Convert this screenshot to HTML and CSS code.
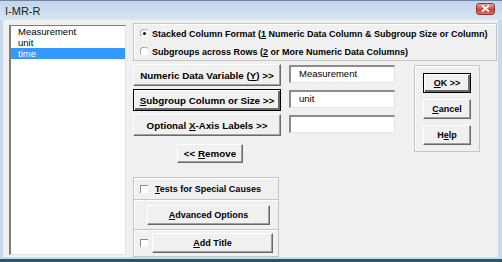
FILE: index.html
```html
<!DOCTYPE html>
<html lang="en">
<head>
   <meta charset="UTF-8">
   <title>I-MR-R</title>
   <link rel="stylesheet" href="styles.css">
</head>
<body>
   <div class="window">
      <div class="titlebar">
         <span class="title">I-MR-R</span>
         <span class="close">
            <svg width="9" height="7" viewBox="0 0 9 7">
               <path d="M1 0.5 L8 6.5 M8 0.5 L1 6.5" stroke="#fff" stroke-width="1.8"/>
            </svg>
         </span>
      </div>
      <div class="client">
         <div class="listbox">
            <div class="item">Measurement</div>
            <div class="item">unit</div>
            <div class="item selected">time</div>
         </div>
         <div class="main">
            <div class="group radio-box">
               <label class="radio-row">
                  <svg class="radio" width="9" height="9" viewBox="0 0 9 9">
                     <circle cx="4.5" cy="4.5" r="4" fill="#fff"/>
                     <path d="M1.2 7 A4 4 0 0 1 7.5 1.4" fill="none" stroke="#8a8a8a" stroke-width="1"/>
                     <circle cx="4.5" cy="4.5" r="1.6" fill="#1a1a1a"/>
                  </svg>
                  <span>Stacked Column Format (<u>1</u> Numeric Data Column &amp; Subgroup Size or Column)</span>
               </label>
               <label class="radio-row">
                  <svg class="radio" width="9" height="9" viewBox="0 0 9 9">
                     <circle cx="4.5" cy="4.5" r="4" fill="#fff"/>
                     <path d="M1.2 7 A4 4 0 0 1 7.5 1.4" fill="none" stroke="#8a8a8a" stroke-width="1"/>
                  </svg>
                  <span>Subgroups across Rows (<u>2</u> or More Numeric Data Columns)</span>
               </label>
            </div>

            <div class="middle">
               <div class="btn-col">
                  <button class="btn var-btn"><span>Numeric Data Variable (<u>Y</u>) &gt;&gt;</span></button>
                  <button class="btn var-btn focused"><span><u>S</u>ubgroup Column or Size &gt;&gt;</span></button>
                  <button class="btn var-btn"><span>Optional <u>X</u>-Axis Labels &gt;&gt;</span></button>
                  <button class="btn remove-btn"><span>&lt;&lt; <u>R</u>emove</span></button>
               </div>
               <div class="field-col">
                  <div class="field">Measurement</div>
                  <div class="field">unit</div>
                  <div class="field"></div>
               </div>
               <div class="group ok-panel">
                  <button class="btn small-btn focused"><span><u>O</u>K &gt;&gt;</span></button>
                  <button class="btn small-btn"><span><u>C</u>ancel</span></button>
                  <button class="btn small-btn"><span>H<u>e</u>lp</span></button>
               </div>
            </div>

            <div class="options">
               <div class="group opt-box tests-box">
                  <span class="check"></span>
                  <span class="opt-label"><u>T</u>ests for Special Causes</span>
               </div>
               <div class="group opt-box adv-box">
                  <button class="btn adv-btn"><span><u>A</u>dvanced Options</span></button>
               </div>
               <div class="group opt-box title-box">
                  <span class="check"></span>
                  <button class="btn title-btn"><span><u>A</u>dd Title</span></button>
               </div>
            </div>
         </div>
      </div>
   </div>
</body>
</html>
```

FILE: styles.css
```css
body {
   margin: 0;
   background: #fff;
}

.window {
   width: 502px;
   height: 262px;
   box-sizing: border-box;
   background: #c9d9ec;
   border-bottom: 3px solid #215a6c;
   display: flex;
   flex-direction: column;
   font-family: "Liberation Sans", Arial, sans-serif;
   font-size: 9.5px;
   color: #000;
   overflow: hidden;
}

.titlebar {
   height: 20px;
   flex-shrink: 0;
   display: flex;
   align-items: center;
   justify-content: space-between;
   padding: 0 7px 0 5px;
   background: linear-gradient(#c3d5ea, #d7e4f2);
   border-top: 1px solid #6f86a3;
   box-sizing: border-box;
}

.title {
   font-size: 11px;
   color: #1b1b1b;
   padding-top: 1px;
}

.close {
   width: 19px;
   height: 12px;
   border-radius: 3px;
   border: 1px solid #8c3b34;
   box-sizing: border-box;
   background: linear-gradient(#e9a394, #c7463a 55%, #d4705f);
   display: flex;
   align-items: center;
   justify-content: center;
   margin-bottom: 4px;
}

.client {
   height: 237px;
   margin: 0 4px 0 3px;
   background: #f0f0f0;
   display: flex;
   gap: 7px;
   padding: 3px 0 0 6px;
   box-sizing: border-box;
}

.listbox {
   width: 117px;
   height: 230px;
   margin-top: 2px;
   box-sizing: border-box;
   background: #fff;
   border-top: 1px solid #7d7d7d;
   border-left: 2px solid #7d7d7d;
   border-right: 1px solid #e3e3e3;
   border-bottom: 1px solid #e3e3e3;
}

.item {
   height: 11px;
   line-height: 11px;
   padding-left: 7px;
}

.selected {
   background: #3399ff;
   color: #fff;
}

.main {
   width: 364px;
   display: flex;
   flex-direction: column;
}

.group {
   border: 1px solid #c5c5c5;
   box-shadow: inset 1px 1px 0 #fff;
   box-sizing: border-box;
}

.radio-box {
   height: 38px;
   padding: 1px 0 0 6px;
   display: flex;
   flex-direction: column;
   gap: 1px;
}

.radio-row {
   height: 17px;
   display: flex;
   align-items: center;
   gap: 3px;
   font-weight: bold;
   font-size: 9px;
}

.middle {
   display: flex;
   margin-top: 3px;
}

.btn-col {
   width: 148px;
   display: flex;
   flex-direction: column;
   gap: 3px;
}

.btn {
   font-family: inherit;
   font-weight: bold;
   font-size: 9px;
   color: #000;
   background: #f0f0f0;
   border: 1px solid;
   border-color: #fff #6a6a6a #6a6a6a #fff;
   box-shadow: inset -1px -1px 0 #a0a0a0;
   box-sizing: border-box;
   padding: 0;
   margin: 0;
   display: flex;
   align-items: center;
   justify-content: center;
}

.btn.focused {
   border: 1px solid #000;
   box-shadow: inset 1px 1px 0 #fff, inset -2px -2px 0 #6a6a6a;
}

.var-btn {
   width: 148px;
   height: 22px;
   font-size: 9.8px;
}

.remove-btn {
   width: 66px;
   height: 19px;
   margin: 5px 0 0 44px;
   font-size: 9.8px;
}

.field-col {
   width: 106px;
   margin: 1px 0 0 8px;
   display: flex;
   flex-direction: column;
   gap: 7px;
}

.field {
   height: 18px;
   box-sizing: border-box;
   background: #fff;
   border-top: 2px solid #8c8c8c;
   border-left: 2px solid #8c8c8c;
   border-right: 1px solid #e6e6e6;
   border-bottom: 1px solid #e6e6e6;
   padding-left: 8px;
   line-height: 14px;
}

.ok-panel {
   width: 66px;
   height: 87px;
   margin: 1px 0 0 19px;
   padding: 7px 0 0 8px;
   display: flex;
   flex-direction: column;
   gap: 6px;
}

.small-btn {
   width: 48px;
   height: 20px;
}

.options {
   width: 146px;
   margin-top: 14px;
   display: flex;
   flex-direction: column;
}

.opt-box {
   display: flex;
   align-items: center;
   padding-left: 6px;
}

.opt-box + .opt-box {
   margin-top: -1px;
}

.tests-box {
   height: 23px;
}

.adv-box {
   height: 31px;
   padding-left: 13px;
}

.title-box {
   height: 28px;
}

.check {
   width: 8px;
   height: 8px;
   box-sizing: border-box;
   background: #fff;
   border-top: 1px solid #8a8a8a;
   border-left: 1px solid #8a8a8a;
   flex-shrink: 0;
}

.opt-label {
   font-weight: bold;
   font-size: 9px;
   margin-left: 7px;
}

.adv-btn {
   width: 123px;
   height: 20px;
}

.title-btn {
   width: 121px;
   height: 20px;
   margin-left: 4px;
}
```
